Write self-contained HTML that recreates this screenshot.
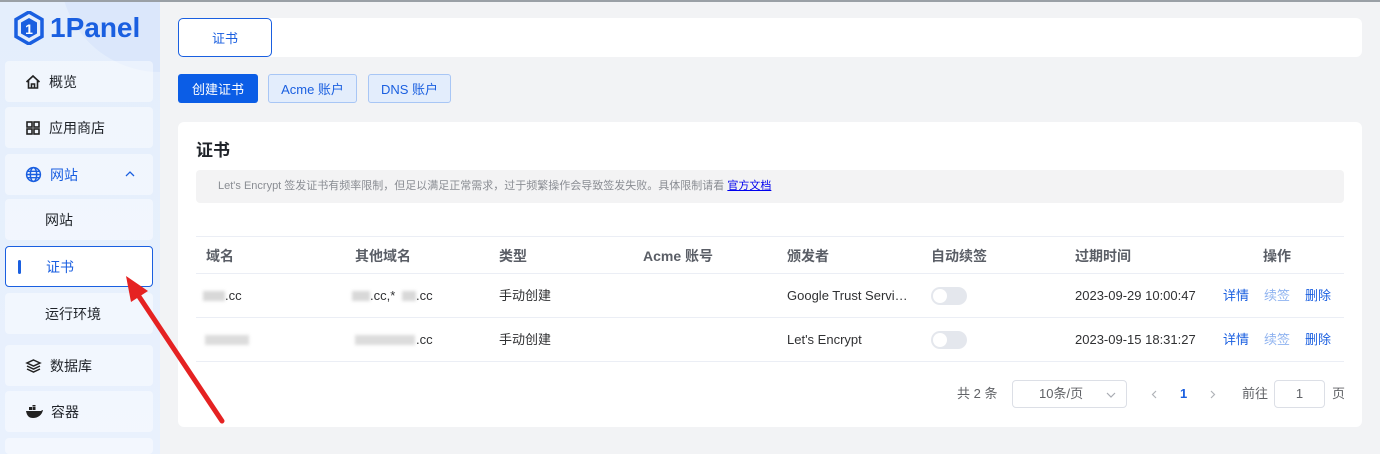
<!DOCTYPE html>
<html><head><meta charset="utf-8"><style>
*{box-sizing:border-box;margin:0;padding:0}
html,body{width:1380px;height:454px;overflow:hidden}
body{background:#f2f3f5;font-family:"Liberation Sans","Noto Sans CJK SC",sans-serif;font-size:14px;color:#1f2329;position:relative}
.top{position:absolute;left:0;top:0;width:1380px;height:2px;background:#9aa0a6}
.side{position:absolute;left:0;top:2px;width:160px;height:452px;background:linear-gradient(180deg,#e4eefc,#e9f1fd);overflow:hidden}
.circ{position:absolute;left:60px;top:-130px;width:200px;height:200px;border-radius:50%;background:#dbe7fb}
.logo{position:absolute;left:14px;top:9px;display:flex;align-items:center;gap:6px;color:#1a5fe0;font-weight:bold;font-size:28px}
.mi{position:absolute;left:5px;width:148px;height:41px;background:rgba(255,255,255,.45);border-radius:4px;display:flex;align-items:center;padding-left:20px;gap:8px;font-size:14px;color:#1f2329;line-height:20px}
.mi.sub{padding-left:40px}
.mi.act{background:#fff;border:1.5px solid #1a5fe0;color:#1a5fe0}
.abs{position:absolute}
.card{position:absolute;background:#fff;border-radius:6px}
.btn{position:absolute;top:74px;height:29px;border-radius:3px;font-size:13px;display:flex;align-items:center;justify-content:center}
.th{position:absolute;top:246px;font-size:14px;line-height:20px;color:#5a5e66;font-weight:bold}
.td{position:absolute;font-size:13px;line-height:20px;color:#303133;white-space:nowrap}
.line{position:absolute;left:196px;width:1148px;height:1px;background:#ebeef5}
.sw{position:absolute;left:931px;width:36px;height:18px;border-radius:9px;background:#e4e7ed}
.sw:after{content:"";position:absolute;left:2px;top:2px;width:14px;height:14px;border-radius:50%;background:#fff}
.blur{position:absolute;height:10px;background:#d8d8d8;filter:blur(1.5px)}
</style></head><body>
<div class="top"></div>
<div class="side">
<div class="circ"></div>
<div class="logo"><svg width="30" height="34" viewBox="0 0 30 34"><polygon points="15,1 28,8.5 28,25.5 15,33 2,25.5 2,8.5" fill="none" stroke="#1a5fe0" stroke-width="3.5"/><polygon points="15,7 23,11.5 23,22.5 15,27 7,22.5 7,11.5" fill="#1a5fe0"/><text x="15" y="23" fill="#fff" font-size="14" font-weight="bold" text-anchor="middle" font-family="Liberation Sans">1</text></svg><span>1Panel</span></div>
<div class="mi" style="top:59px"><svg width="16" height="16" viewBox="0 0 16 16" fill="none" stroke="#222" stroke-width="1.6"><path d="M1.5 8L8 2l6.5 6M3.5 6.5V14h9V6.5M6.5 14v-4h3v4"/></svg>概览</div>
<div class="mi" style="top:105px"><svg width="16" height="16" viewBox="0 0 16 16" fill="none" stroke="#222" stroke-width="1.6"><rect x="2" y="2" width="5" height="5"/><rect x="9" y="2" width="5" height="5"/><rect x="2" y="9" width="5" height="5"/><rect x="9" y="9" width="5" height="5"/></svg>应用商店</div>
<div class="mi" style="top:152px;color:#1a5fe0"><svg width="17" height="17" viewBox="0 0 16 16" fill="none" stroke="#1a5fe0" stroke-width="1.4"><circle cx="8" cy="8" r="6.5"/><ellipse cx="8" cy="8" rx="3" ry="6.5"/><path d="M1.5 8h13M2.5 5h11M2.5 11h11"/></svg>网站<svg style="position:absolute;left:120px;top:17px" width="10" height="6" viewBox="0 0 10 6" fill="none" stroke="#1a5fe0" stroke-width="1.3"><path d="M1 5l4-4 4 4"/></svg></div>
<div class="mi sub" style="top:197px">网站</div>
<div class="mi sub act" style="top:244px"><span style="position:absolute;left:12px;top:13px;width:3px;height:14px;background:#1a5fe0;border-radius:2px"></span>证书</div>
<div class="mi sub" style="top:291px">运行环境</div>
<div class="mi" style="top:343px"><svg width="17" height="16" viewBox="0 0 16 16" fill="none" stroke="#222" stroke-width="1.5"><path d="M8 2l6.5 3L8 8 1.5 5zM1.5 8L8 11l6.5-3M1.5 11L8 14l6.5-3"/></svg>数据库</div>
<div class="mi" style="top:389px"><svg width="18" height="14" viewBox="0 0 18 14"><rect x="4" y="2" width="3" height="3" fill="#222"/><rect x="7.5" y="2" width="3" height="3" fill="#222"/><rect x="7.5" y="-1.5" width="3" height="3" fill="#222"/><path d="M1 6h15c1-1 2-1 2-1-1 5-5 8-10 8C4 13 2 11 1 6z" fill="#222"/></svg>容器</div>
<div class="mi" style="top:436px;height:16px"></div>
</div>

<div class="card" style="left:178px;top:18px;width:1184px;height:39px"></div>
<div class="abs" style="left:178px;top:18px;width:94px;height:39px;border:1.5px solid #1a5fe0;border-radius:5px;background:#fff;color:#1a5fe0;display:flex;align-items:center;justify-content:center;font-size:13px">证书</div>

<div class="btn" style="left:178px;width:80px;background:#0b5de6;color:#fff">创建证书</div>
<div class="btn" style="left:268px;width:89px;background:#e3edfc;border:1px solid #a8c6f5;color:#1a5fe0">Acme 账户</div>
<div class="btn" style="left:368px;width:83px;background:#e3edfc;border:1px solid #a8c6f5;color:#1a5fe0">DNS 账户</div>

<div class="card" style="left:178px;top:122px;width:1184px;height:305px"></div>
<div class="abs" style="left:196px;top:139px;font-size:17px;line-height:24px;font-weight:bold">证书</div>
<div class="abs" style="left:196px;top:170px;width:1148px;height:33px;background:#f3f3f4;border-radius:4px;font-size:11px;line-height:33px;color:#8a8d93;padding-left:22px">Let's Encrypt 签发证书有频率限制，但足以满足正常需求，过于频繁操作会导致签发失败。具体限制请看 <span style="color:#0000ee;text-decoration:underline">官方文档</span></div>

<div class="line" style="top:236px"></div>
<div class="th" style="left:206px">域名</div>
<div class="th" style="left:355px">其他域名</div>
<div class="th" style="left:499px">类型</div>
<div class="th" style="left:643px">Acme 账号</div>
<div class="th" style="left:787px">颁发者</div>
<div class="th" style="left:931px">自动续签</div>
<div class="th" style="left:1075px">过期时间</div>
<div class="th" style="left:1263px">操作</div>
<div class="line" style="top:273px"></div>
<div class="line" style="top:317px"></div>
<div class="line" style="top:361px"></div>

<div class="blur" style="left:203px;top:291px;width:22px"></div><div class="td" style="left:225px;top:286px">.cc</div>
<div class="blur" style="left:352px;top:291px;width:18px"></div><div class="td" style="left:370px;top:286px">.cc,*</div><div class="blur" style="left:402px;top:291px;width:14px"></div><div class="td" style="left:416px;top:286px">.cc</div>
<div class="td" style="left:499px;top:286px">手动创建</div>
<div class="td" style="left:787px;top:286px">Google Trust Servi…</div>
<div class="sw" style="top:287px"></div>
<div class="td" style="left:1075px;top:286px">2023-09-29 10:00:47</div>
<div class="td" style="left:1223px;top:286px;color:#1a5fe0">详情</div>
<div class="td" style="left:1264px;top:286px;color:#8fb3f0">续签</div>
<div class="td" style="left:1305px;top:286px;color:#1a5fe0">删除</div>

<div class="blur" style="left:205px;top:335px;width:44px;background:#dcdcdc"></div>
<div class="blur" style="left:355px;top:335px;width:60px;background:#dcdcdc"></div><div class="td" style="left:416px;top:330px">.cc</div>
<div class="td" style="left:499px;top:330px">手动创建</div>
<div class="td" style="left:787px;top:330px">Let's Encrypt</div>
<div class="sw" style="top:331px"></div>
<div class="td" style="left:1075px;top:330px">2023-09-15 18:31:27</div>
<div class="td" style="left:1223px;top:330px;color:#1a5fe0">详情</div>
<div class="td" style="left:1264px;top:330px;color:#8fb3f0">续签</div>
<div class="td" style="left:1305px;top:330px;color:#1a5fe0">删除</div>

<div class="td" style="left:957px;top:384px;color:#606266">共 2 条</div>
<div class="abs" style="left:1012px;top:380px;width:115px;height:28px;border:1px solid #dcdfe6;border-radius:4px;font-size:13px;line-height:26px;color:#606266;padding-left:26px">10条/页<svg style="position:absolute;right:10px;top:11px" width="10" height="6" viewBox="0 0 10 6" fill="none" stroke="#a8abb2" stroke-width="1.2"><path d="M1 1l4 4 4-4"/></svg></div>
<svg class="abs" style="left:1151px;top:390px" width="6" height="9" viewBox="0 0 6 9" fill="none" stroke="#b0b3b8" stroke-width="1.2"><path d="M5 1L1.5 4.5 5 8"/></svg>
<div class="td" style="left:1180px;top:384px;color:#1a5fe0;font-weight:bold">1</div>
<svg class="abs" style="left:1210px;top:390px" width="6" height="9" viewBox="0 0 6 9" fill="none" stroke="#b0b3b8" stroke-width="1.2"><path d="M1 1l3.5 3.5L1 8"/></svg>
<div class="td" style="left:1242px;top:384px;color:#606266">前往</div>
<div class="abs" style="left:1274px;top:380px;width:51px;height:28px;border:1px solid #dcdfe6;border-radius:4px;text-align:center;font-size:13px;line-height:26px;color:#606266">1</div>
<div class="td" style="left:1332px;top:384px;color:#606266">页</div>

<svg class="abs" style="left:0;top:0" width="300" height="454"><line x1="222" y1="421" x2="138" y2="295" stroke="#e52222" stroke-width="5" stroke-linecap="round"/><polygon points="126,276 148,291 131,302" fill="#e52222"/></svg>
</body></html>
